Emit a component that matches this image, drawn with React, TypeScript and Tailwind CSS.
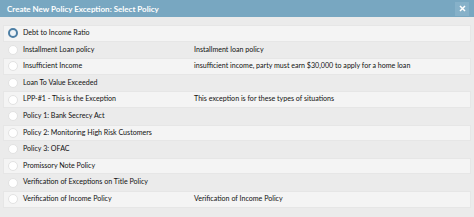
import React from 'react';

const rows: { name: string; desc: string }[] = [
  { name: 'Debt to Income Ratio', desc: '' },
  { name: 'Installment Loan policy', desc: 'Installment loan policy' },
  { name: 'Insufficient Income', desc: 'insufficient income, party must earn $30,000 to apply for a home loan' },
  { name: 'Loan To Value Exceeded', desc: '' },
  { name: 'LPP-#1 - This is the Exception', desc: 'This exception is for these types of situations' },
  { name: 'Policy 1: Bank Secrecy Act', desc: '' },
  { name: 'Policy 2: Monitoring High Risk Customers', desc: '' },
  { name: 'Policy 3: OFAC', desc: '' },
  { name: 'Promissory Note Policy', desc: '' },
  { name: 'Verification of Exceptions on Title Policy', desc: '' },
  { name: 'Verification of Income Policy', desc: 'Verification of Income Policy' },
];

export default function App() {
  return (
    <div className="w-[474px] h-[217px] bg-[#ebebeb] overflow-hidden font-['Lato',sans-serif]">
      {/* Dialog header */}
      <div className="h-[17px] bg-[#78a7c1] flex items-center justify-between pl-[7px] pr-[5px]">
        <span className="text-white font-bold text-[8px]">Create New Policy Exception: Select Policy</span>
        <span className="w-[14px] h-[14px] bg-[#86b1c9] flex items-center justify-center">
          <svg width="7" height="7" viewBox="0 0 7 7">
            <path d="M1 1 L6 6 M6 1 L1 6" stroke="#ffffff" strokeWidth="1.5" />
          </svg>
        </span>
      </div>

      {/* Policy list */}
      <div className="px-[3px] pt-[8px] flex flex-col">
        {rows.map((r, i) => (
          <div
            key={r.name}
            className={
              'h-[16.6px] flex items-center text-[7.1px] text-[#111] ' +
              (i % 2 === 0 ? 'bg-[#f4f4f4] border border-[#e6e6e6]' : 'border border-transparent')
            }
          >
            <div className="w-[190px] flex items-center pl-[4px] shrink-0">
              {i === 0 ? (
                <span className="w-[10px] h-[10px] rounded-full border-[2px] border-[#4d7fa5] bg-[#eef3f7] mr-[5px]" />
              ) : (
                <span className="w-[10px] h-[10px] rounded-full bg-white border border-[#e2e2e2] mr-[5px]" />
              )}
              <span className="whitespace-nowrap">{r.name}</span>
            </div>
            <span className="whitespace-nowrap">{r.desc}</span>
          </div>
        ))}
      </div>
    </div>
  );
}
